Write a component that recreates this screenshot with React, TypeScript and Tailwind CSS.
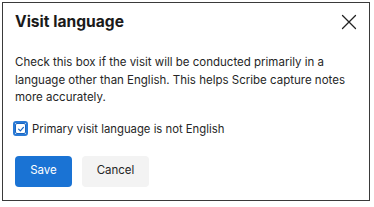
import React from "react";

export default function App() {
  return (
    <div className="w-[374px] h-[207px] bg-white pt-[2px] pl-[2px] font-['Inter','Noto_Sans',sans-serif]">
      <div className="w-[368px] h-[199px] border border-[#3a3a3a] bg-white flex flex-col px-[12px]">
        <div className="flex items-center justify-between h-[38px]">
          <h1 className="text-[15.6px] leading-[20px] font-bold text-[#1a1a1a]">Visit language</h1>
          <svg width="16" height="16" viewBox="0 0 16 16" fill="none" stroke="#222" strokeWidth="1.3" strokeLinecap="round">
            <path d="M1.5 1.5L14.5 14.5M14.5 1.5L1.5 14.5" />
          </svg>
        </div>
        <p className="mt-[13px] text-[11.5px] leading-[17.5px] text-[#262626]">
          Check this box if the visit will be conducted primarily in a language other than English. This helps Scribe capture notes more accurately.
        </p>
        <label className="mt-[14px] ml-[-2px] flex items-center gap-[4px] text-[11.3px] leading-[16px] text-[#262626]">
          <span className="w-[15px] h-[15px] rounded-[3px] border-2 border-[#2a7ad6] bg-white flex items-center justify-center">
            <span className="w-[11px] h-[11px] rounded-[2px] border border-[#1a65c0] bg-white flex items-center justify-center">
              <svg width="8" height="8" viewBox="0 0 10 10" fill="none" stroke="#1a65c0" strokeWidth="1.5" strokeLinecap="round" strokeLinejoin="round">
                <path d="M2 5.2L4.2 7.3L8 3" />
              </svg>
            </span>
          </span>
          Primary visit language is not English
        </label>
        <div className="mt-[19px] flex gap-[10px]">
          <button className="w-[57px] h-[31px] rounded-[4px] bg-[#1a73d4] text-white text-[11.5px]">Save</button>
          <button className="w-[67px] h-[31px] rounded-[4px] bg-[#f3f3f3] text-[#262626] text-[11.5px]">Cancel</button>
        </div>
      </div>
    </div>
  );
}
